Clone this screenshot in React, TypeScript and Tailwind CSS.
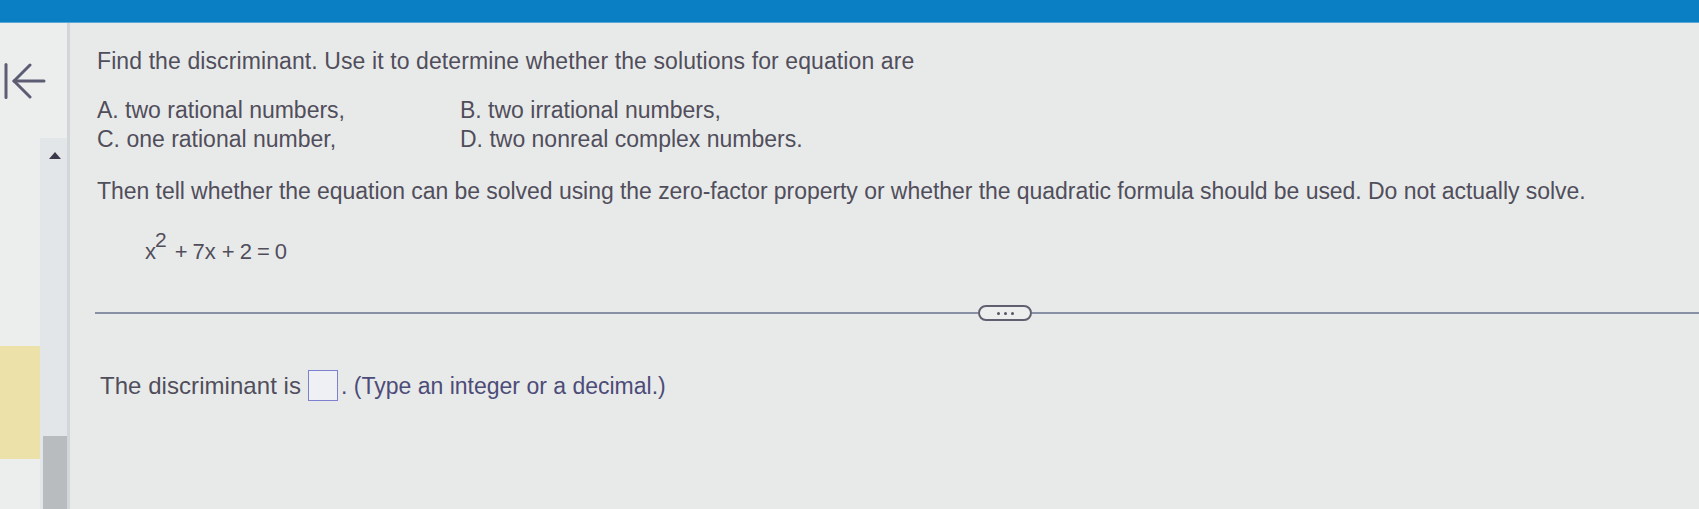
import React from "react";

export default function App() {
  const font = { fontFamily: '"Liberation Sans", Arial, sans-serif' };
  return (
    <div
      className="w-[1699px] h-[509px] overflow-hidden bg-[#e8eaea] flex flex-col text-[#514e5b]"
      style={font}
    >
      <div className="h-[23px] bg-[#0b7fc3] shrink-0 border-b border-[#5aa6d4]" />
      <div className="flex flex-1 min-h-0">
        {/* Sidebar */}
        <div className="w-[70px] shrink-0 bg-[#eceeee] border-r-[3px] border-[#d3d6d8] flex flex-col">
          <div className="h-[40px] shrink-0" />
          <div className="h-[36px] shrink-0 pl-[4px] flex items-center">
            <svg width="44" height="36" viewBox="0 0 44 36" fill="none" stroke="#5c5c72" strokeWidth="3" strokeLinecap="round" strokeLinejoin="round">
              <path d="M2 1.5 V34.5" />
              <path d="M10 18 H40" />
              <path d="M26 2 L10 18 L26 34" />
            </svg>
          </div>
          <div className="flex flex-1 min-h-0 pt-[39px]">
            <div className="w-[40px] shrink-0 flex flex-col">
              <div className="h-[208px] shrink-0" />
              <div className="h-[113px] bg-[#ebe1a9] shrink-0" />
            </div>
            <div className="flex-1 bg-[#e3e6e8] flex flex-col">
              <div className="h-[14px] shrink-0" />
              <div className="flex justify-center pl-[2px]">
                <div className="w-0 h-0 border-l-[6px] border-r-[6px] border-b-[7px] border-l-transparent border-r-transparent border-b-[#3a3a4c]" />
              </div>
              <div className="flex-1" />
              <div className="h-[73px] ml-[3px] bg-[#b9bcbf] shrink-0" />
            </div>
          </div>
        </div>

        {/* Main */}
        <div className="flex-1 min-w-0 pl-[27px] pt-[24px]">
          <div className="text-[23px] leading-[29px] tracking-[0.1px] whitespace-nowrap">
            Find the discriminant. Use it to determine whether the solutions for equation are
          </div>
          <div className="mt-[20px] grid grid-cols-[363px_auto] text-[23px] leading-[29px] whitespace-nowrap">
            <div>A. two rational numbers,</div>
            <div>B. two irrational numbers,</div>
            <div>C. one rational number,</div>
            <div>D. two nonreal complex numbers.</div>
          </div>
          <div className="mt-[23px] text-[23px] leading-[29px] tracking-[-0.05px] whitespace-nowrap">
            Then tell whether the equation can be solved using the zero-factor property or whether the quadratic formula should be used. Do not actually solve.
          </div>
          <div className="mt-[31px] pl-[48px] text-[22px] leading-[29px] whitespace-nowrap flex items-baseline">
            <span>x</span>
            <span className="text-[21px] relative -top-[12px] -ml-[1px]">2</span>
            <span className="ml-[8px]">+</span>
            <span className="ml-[5px]">7x</span>
            <span className="ml-[6px]">+</span>
            <span className="ml-[5px]">2</span>
            <span className="ml-[5px]">=</span>
            <span className="ml-[5px]">0</span>
          </div>
          <div className="mt-[39px] -ml-[2px] flex items-center">
            <div className="w-[883px] h-[1.5px] bg-[#8890a6]" />
            <div className="w-[54px] h-[16px] rounded-full border-2 border-[#5f5f70] bg-[#eceeee] flex items-center justify-center gap-[4px] shrink-0">
              <span className="w-[3px] h-[3px] rounded-full bg-[#555566]" />
              <span className="w-[3px] h-[3px] rounded-full bg-[#555566]" />
              <span className="w-[3px] h-[3px] rounded-full bg-[#555566]" />
            </div>
            <div className="flex-1 h-[1.5px] bg-[#8890a6]" />
          </div>
          <div className="mt-[49px] pl-[3px] flex items-center leading-[30px] whitespace-nowrap">
            <span className="text-[24px] tracking-[0.05px]">The discriminant is</span>
            <span className="ml-[7px] w-[30px] h-[31px] border-[1.5px] border-[#7c80cf] bg-[#eef0f4] shrink-0" />
            <span className="ml-[3px] text-[23px] tracking-[0px] text-[#4d4c78]">. (Type an integer or a decimal.)</span>
          </div>
        </div>
      </div>
    </div>
  );
}
